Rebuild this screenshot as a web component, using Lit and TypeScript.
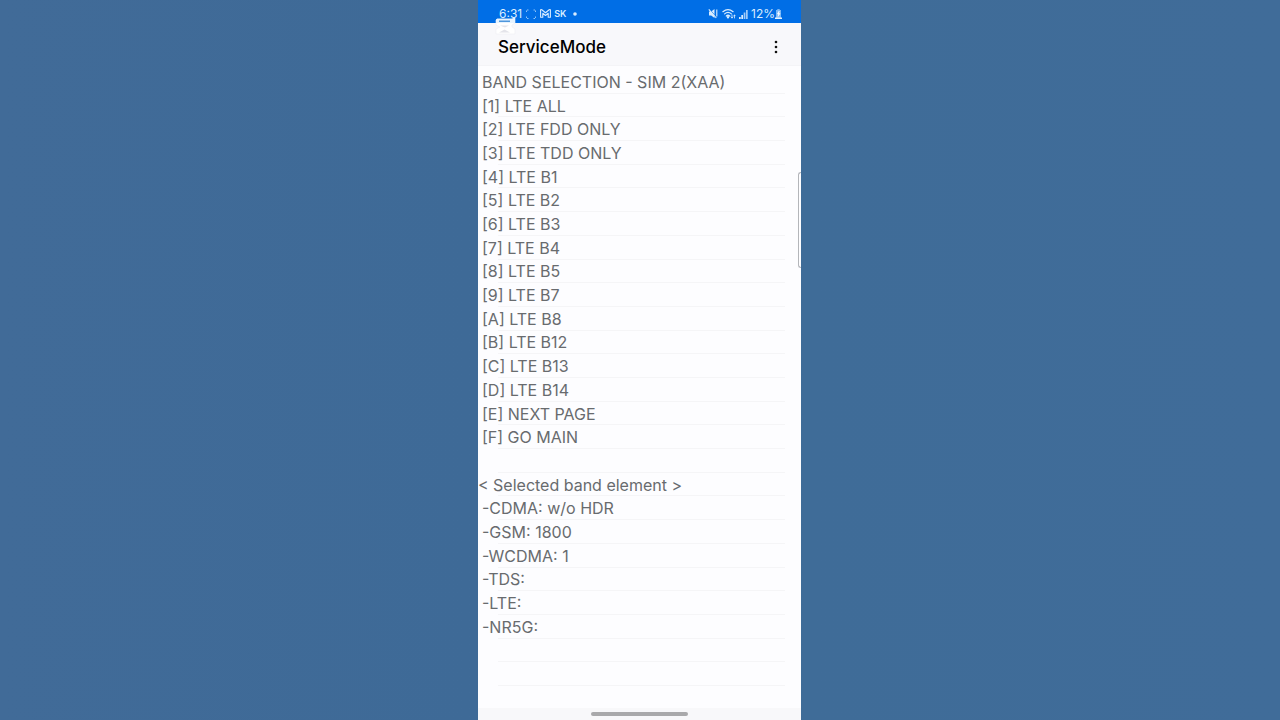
import { LitElement, html, css } from "lit";
import { customElement, property } from "lit/decorators.js";

const MENU_ROWS = [
  "BAND SELECTION - SIM 2(XAA)",
  "[1] LTE ALL",
  "[2] LTE FDD ONLY",
  "[3] LTE TDD ONLY",
  "[4] LTE B1",
  "[5] LTE B2",
  "[6] LTE B3",
  "[7] LTE B4",
  "[8] LTE B5",
  "[9] LTE B7",
  "[A] LTE B8",
  "[B] LTE B12",
  "[C] LTE B13",
  "[D] LTE B14",
  "[E] NEXT PAGE",
  "[F] GO MAIN",
  "",
  "< Selected band element >",
  "-CDMA: w/o HDR",
  "-GSM: 1800",
  "-WCDMA: 1",
  "-TDS:",
  "-LTE:",
  "-NR5G:",
  "",
  "",
];

@customElement("status-bar")
export class StatusBar extends LitElement {
  static styles = css`
    :host {
      display: flex;
      justify-content: space-between;
      align-items: center;
      box-sizing: border-box;
      height: 23px;
      padding: 4px 19px 0 21px;
      background: #006ee6;
      color: #d8ecff;
      font-size: 12px;
      line-height: 16px;
    }
    .group {
      display: flex;
      align-items: center;
      gap: 4px;
    }
    .right {
      gap: 3px;
    }
    .carrier {
      margin-left: -1px;
      font-size: 9px;
      font-weight: 600;
    }
    .level {
      display: flex;
      align-items: center;
    }
    svg {
      display: block;
    }
  `;

  render() {
    return html`
      <div class="group">
        <span>6:31</span>
        <svg width="10" height="10" viewBox="0 0 10 10" fill="none" stroke="#8fc4f8" aria-hidden="true">
          <path d="M.5 3V1H2.500M7.500 1h2v2M9.500 7.500V9.500h-2M2.500 9.500h-2v-2" stroke-dasharray="1.500 1" />
        </svg>
        <svg width="11" height="9" viewBox="0 0 11 9" fill="none" stroke="currentColor" stroke-width="1.100" stroke-linejoin="round" aria-hidden="true">
          <path d="M.6 8.300V1.200Q.8.300 1.800.7L5.500 3.700 9.200.7Q10.200.300 10.400 1.200V8.300H8.200V4.300L5.500 6.500 2.800 4.300V8.300Z" />
        </svg>
        <span class="carrier">SK</span>
        <svg width="10" height="4" viewBox="0 0 10 4" fill="currentColor" aria-hidden="true">
          <circle cx="5" cy="2" r="1.800" />
        </svg>
      </div>
      <div class="group right">
        <svg width="11" height="11" viewBox="0 0 11 11" fill="currentColor" aria-hidden="true">
          <path d="M1 3.500H3.200L6.500 1v9L3.200 7.500H1Z" />
          <path d="M1.500 1l7.500 9" stroke="#006ee6" stroke-width=".8" />
          <path d="M.8 1.300l7.500 8.700M8.800 1.500v7" stroke="currentColor" stroke-width="1.100" fill="none" />
        </svg>
        <svg width="14" height="11" viewBox="0 0 14 11" fill="none" stroke="currentColor" stroke-width="1.200" stroke-linecap="round" aria-hidden="true">
          <path d="M.9 3.700Q6 -.6 11.100 3.700M2.600 5.900Q6 3 9.400 5.900M4.300 8Q6 6.500 7.700 8" />
          <circle cx="6" cy="9.300" r=".6" fill="currentColor" />
          <path d="M10 7v3M9 9l1 1 1-1M12.500 10V7M11.800 7.800l.7-.8.700.8" stroke-width=".8" />
        </svg>
        <svg width="9" height="10" viewBox="0 0 9 10" fill="currentColor" aria-hidden="true">
          <path d="M0 8h1.700v2H0ZM2.300 6H4v4H2.300Z" />
          <path d="M4.700 3.500h1.700V10H4.700ZM7 1h1.700v9H7Z" opacity=".75" />
        </svg>
        <span class="level">
          12%
          <svg width="7" height="10" viewBox="0 0 7 10" aria-hidden="true">
            <path d="M2.300 0h2.400v1H6v9H1V1h1.300Z" fill="#79b7f6" />
            <path d="M0 8.500h7V10H0Z" fill="#e4f3ff" />
            <path d="M4.200 2 2.400 5h1.200L3 7.500 5 4.500H3.800Z" fill="#fff" stroke="#fff" stroke-width=".5" />
          </svg>
        </span>
      </div>
    `;
  }
}

@customElement("app-header")
export class AppHeader extends LitElement {
  @property() heading = "";

  static styles = css`
    :host {
      display: flex;
      justify-content: space-between;
      align-items: center;
      box-sizing: border-box;
      height: 43px;
      padding: 6px 13px 0 20px;
      background: #f8f8fb;
      border-bottom: 1px solid #f4f4f7;
      position: relative;
    }
    h1 {
      margin: 0;
      font-size: 17px;
      font-weight: 500;
      line-height: 24px;
      color: #000;
    }
    button {
      display: flex;
      justify-content: center;
      align-items: center;
      width: 24px;
      height: 24px;
      padding: 0;
      border: 0;
      background: none;
      cursor: pointer;
    }
    .overlay {
      position: absolute;
      top: -5px;
      left: 17px;
    }
  `;

  render() {
    return html`
      <svg class="overlay" width="22" height="18" viewBox="0 0 22 18" aria-hidden="true">
        <path d="M2 1h15l3-1v5l-3 2v2l3 2v5H1v-5l4-2-4-2V2Z" fill="#fff" stroke="#efeff3" stroke-width=".6" />
        <path d="M2 .7h15l3-1V5H1V2Z" fill="#e6f3ff" />
        <path d="M4 2.500h11v1.500H4Z" fill="#4f97dc" />
        <path d="M5 7.500h9L10 9.500ZM4 14.500l5.500-3 5.500 3Z" fill="#e4e4ea" />
      </svg>
      <h1>${this.heading}</h1>
      <button type="button" aria-label="More options">
        <svg width="4" height="14" viewBox="0 0 4 14" fill="#111" aria-hidden="true">
          <circle cx="2" cy="2" r="1.300" />
          <circle cx="2" cy="7" r="1.300" />
          <circle cx="2" cy="12" r="1.300" />
        </svg>
      </button>
    `;
  }
}

@customElement("band-list")
export class BandList extends LitElement {
  @property({ attribute: false }) rows: string[] = [];

  static styles = css`
    :host {
      display: block;
      position: relative;
      padding: 4px 0 22px;
      box-sizing: border-box;
    }
    ul {
      display: grid;
      grid-auto-rows: 1fr;
      height: 100%;
      margin: 0;
      padding: 0;
      list-style: none;
    }
    li {
      display: flex;
      align-items: center;
      padding-left: 4px;
      font-size: 16px;
      font-weight: 400;
      line-height: 20px;
      color: #686b6e;
      white-space: pre;
      background: linear-gradient(#f5f5f7, #f5f5f7) 20px 100% / calc(100% - 36px) 1px no-repeat;
    }
    .section {
      padding-left: 0;
    }
    .scrollbar {
      position: absolute;
      top: 16.5%;
      right: 0;
      width: 3px;
      height: 15%;
      box-sizing: border-box;
      border: 1px solid #b4b6ba;
      border-right: 0;
      border-radius: 3px 0 0 3px;
    }
  `;

  render() {
    return html`
      <ul>
        ${this.rows.map(
          (row) => html`<li class=${row.startsWith("<") ? "section" : ""}>${row}</li>`
        )}
      </ul>
      <div class="scrollbar"></div>
    `;
  }
}

@customElement("app-root")
export class AppRoot extends LitElement {
  static styles = css`
    :host {
      display: flex;
      justify-content: center;
      box-sizing: border-box;
      height: 100vh;
      padding-right: 1px;
      overflow: hidden;
      font-family: Inter, Roboto, sans-serif;
      background: linear-gradient(90deg, #416b98, #3e6a97 37%, #3f6c98 63%, #406c99);
    }
    .phone {
      display: flex;
      flex-direction: column;
      height: 100%;
      max-width: 100%;
      aspect-ratio: 323 / 720;
      background: #fdfdff;
    }
    band-list {
      flex: 1;
      min-height: 0;
    }
    .nav {
      display: flex;
      justify-content: center;
      align-items: center;
      height: 12px;
      background: #f8f8fa;
    }
    .handle {
      width: 30%;
      height: 4px;
      border-radius: 2px;
      background: #a9a9ab;
    }
  `;

  render() {
    return html`
      <main class="phone">
        <status-bar></status-bar>
        <app-header heading="ServiceMode"></app-header>
        <band-list .rows=${MENU_ROWS}></band-list>
        <div class="nav"><div class="handle"></div></div>
      </main>
    `;
  }
}
